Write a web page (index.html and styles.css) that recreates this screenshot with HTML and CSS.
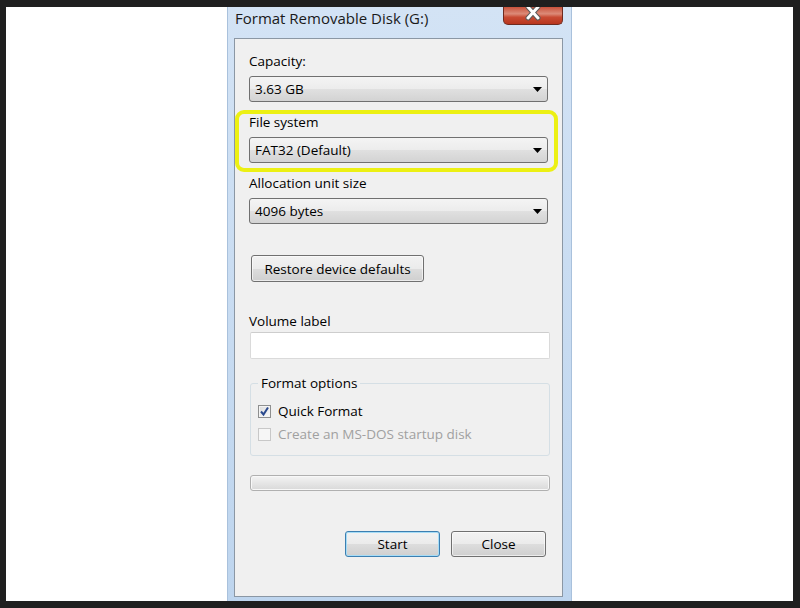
FILE: index.html
```html
<!DOCTYPE html>
<html lang="en">
<head>
    <meta charset="UTF-8">
    <meta name="viewport" content="width=device-width, initial-scale=1.0">
    <title>Format Removable Disk (G:)</title>
    <link rel="stylesheet" href="styles.css">
</head>
<body>
    <div class="screen">
        <div class="window">
            <div class="titlebar">
                <span class="title">Format Removable Disk (G:)</span>
                <div class="close-btn">
                    <svg width="18" height="14" viewBox="0 0 18 14">
                        <path d="M4 0 L14 11 M14 0 L4 11" stroke="#5a5a5a" stroke-width="5" stroke-linecap="round"/>
                        <path d="M4 0 L14 11 M14 0 L4 11" stroke="#ffffff" stroke-width="3" stroke-linecap="round"/>
                    </svg>
                </div>
            </div>

            <div class="panel">
                <div class="highlight"></div>

                <div class="field">
                    <label class="label">Capacity:</label>
                    <div class="combo">
                        <span>3.63 GB</span>
                        <svg class="arrow" width="9" height="5" viewBox="0 0 9 5"><path d="M0 0 H9 L4.5 5 Z" fill="#000"/></svg>
                    </div>
                </div>
                <div class="field">
                    <label class="label">File system</label>
                    <div class="combo">
                        <span>FAT32 (Default)</span>
                        <svg class="arrow" width="9" height="5" viewBox="0 0 9 5"><path d="M0 0 H9 L4.5 5 Z" fill="#000"/></svg>
                    </div>
                </div>
                <div class="field">
                    <label class="label">Allocation unit size</label>
                    <div class="combo">
                        <span>4096 bytes</span>
                        <svg class="arrow" width="9" height="5" viewBox="0 0 9 5"><path d="M0 0 H9 L4.5 5 Z" fill="#000"/></svg>
                    </div>
                </div>

                <button class="btn restore">Restore device defaults</button>

                <label class="label volume-label">Volume label</label>
                <input type="text" class="textbox">

                <fieldset class="group">
                    <legend>Format options</legend>
                    <div class="check-row">
                        <span class="checkbox">
                            <svg width="11" height="11" viewBox="0 0 11 11"><path d="M2 5.5 L4.5 8.5 L9 1.5" stroke="#2b4a8e" stroke-width="2" fill="none"/></svg>
                        </span>
                        <span>Quick Format</span>
                    </div>
                    <div class="check-row disabled">
                        <span class="checkbox"></span>
                        <span>Create an MS-DOS startup disk</span>
                    </div>
                </fieldset>

                <div class="progress"></div>

                <div class="actions">
                    <button class="btn default">Start</button>
                    <button class="btn">Close</button>
                </div>
            </div>
        </div>
    </div>
</body>
</html>
```

FILE: styles.css
```css
body {
    margin: 0;
    padding: 7px 7px 7px 6px;
    background: #1f1f1f;
    font-family: 'Open Sans', sans-serif;
    font-size: 13.5px;
    color: #000;
}

.screen {
    background: #fff;
    height: 594px;
    display: flex;
    justify-content: center;
    overflow: hidden;
}

.window {
    width: 345px;
    box-sizing: border-box;
    padding: 0 8px 4px 6px;
    background: linear-gradient(180deg, #d3e3f5, #bed5ee);
    border-left: 1px solid #a9c1dc;
    border-right: 1px solid #a9c1dc;
    display: flex;
    flex-direction: column;
}

.titlebar {
    height: 31px;
    display: flex;
    justify-content: space-between;
    align-items: flex-start;
}

.title {
    font-size: 15px;
    line-height: 22px;
    margin-left: 1px;
    color: #1a1a1a;
}

.close-btn {
    width: 60px;
    height: 18px;
    box-sizing: border-box;
    border: 1px solid #6e2b20;
    border-top: none;
    border-radius: 0 0 5px 5px;
    background: linear-gradient(180deg, #c8523c 0%, #dc8b78 40%, #c94b33 60%, #b8361f 100%);
    display: flex;
    justify-content: center;
    align-items: flex-start;
}

.panel {
    flex: 1;
    position: relative;
    background: #f0f0f0;
    border: 1px solid #8b97a4;
    padding: 14px 14px 0 14px;
}

.highlight {
    position: absolute;
    top: 71px;
    left: 0;
    width: 323px;
    height: 62px;
    box-sizing: border-box;
    border: 4px solid #ecf013;
    border-radius: 9px;
}

.label {
    display: block;
    line-height: 16px;
    margin-bottom: 7px;
}

.field + .field {
    margin-top: 12px;
}

.combo {
    height: 26px;
    box-sizing: border-box;
    border: 1px solid #707070;
    border-radius: 3px;
    background: linear-gradient(180deg, #f4f4f4 0%, #ececec 50%, #e0e0e0 51%, #d3d3d3 100%);
    display: flex;
    align-items: center;
    justify-content: space-between;
    padding: 0 5px;
}

.arrow {
    margin-top: 1px;
}

.btn {
    font-family: 'Open Sans', sans-serif;
    font-size: 13.5px;
    color: #000;
    height: 26px;
    border: 1px solid #707070;
    border-radius: 3px;
    background: linear-gradient(180deg, #f2f2f2 0%, #ebebeb 50%, #dddddd 51%, #cfcfcf 100%);
    box-shadow: inset 0 0 0 1px rgba(255, 255, 255, 0.6);
    padding: 0;
}

.restore {
    display: block;
    margin: 31px 0 0 2px;
    width: 173px;
    height: 27px;
}

.volume-label {
    margin-top: 31px;
    margin-bottom: 3px;
}

.textbox {
    display: block;
    width: 300px;
    height: 27px;
    box-sizing: border-box;
    margin: 0 0 0 1px;
    border: 1px solid #dadada;
    border-top-color: #cdcdcd;
    border-radius: 2px;
    background: #fff;
}

.group {
    margin: 16px 0 0 1px;
    width: 300px;
    box-sizing: border-box;
    border: 1px solid #d5dfe5;
    border-radius: 3px;
    padding: 0 7px 11px 7px;
}

.group legend {
    padding: 0 3px;
    line-height: 16px;
}

.check-row {
    display: flex;
    align-items: center;
    height: 20px;
    margin-top: 10px;
}

.check-row + .check-row {
    margin-top: 3px;
}

.checkbox {
    width: 13px;
    height: 13px;
    box-sizing: border-box;
    border: 1px solid #8e8f8f;
    background: linear-gradient(135deg, #dcdcdc, #fbfbfb);
    box-shadow: inset 0 0 0 1px #f4f4f4;
    margin-right: 7px;
    display: flex;
    align-items: center;
    justify-content: center;
}

.disabled {
    color: #a0a0a0;
}

.disabled .checkbox {
    border-color: #c8c8c8;
    background: #f6f6f6;
    box-shadow: none;
}

.progress {
    margin: 19px 0 0 1px;
    width: 300px;
    height: 16px;
    box-sizing: border-box;
    border: 1px solid #b0b0b0;
    border-radius: 3px;
    background: linear-gradient(180deg, #f4f4f4 0%, #e6e6e6 50%, #d9d9d9 100%);
    box-shadow: inset 0 0 0 1px #f8f8f8;
}

.actions {
    margin-top: 40px;
    display: flex;
    justify-content: flex-end;
    gap: 11px;
    margin-right: 2px;
}

.actions .btn {
    width: 95px;
}

.btn.default {
    border-color: #3c7fb1;
    box-shadow: inset 0 0 0 1px #a6dcf6;
}
```
